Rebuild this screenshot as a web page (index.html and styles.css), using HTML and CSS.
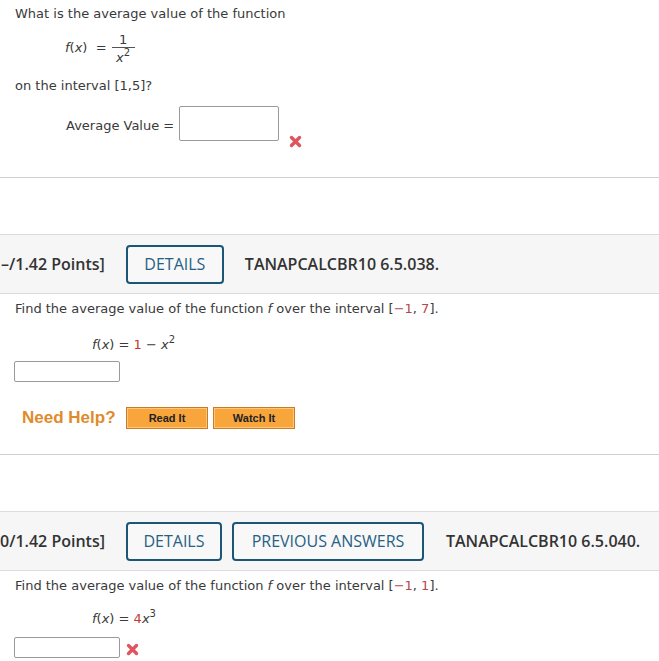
FILE: index.html
```html
<!DOCTYPE html>
<html lang="en">
<head>
<meta charset="utf-8">
<title>Average value</title>
<link rel="stylesheet" href="styles.css">
</head>
<body>
<div class="q q1">
  <p class="txt first">What is the average value of the function</p>
  <div class="formula">
    <span class="fx"><i>f</i>(<i>x</i>) &nbsp;=</span>
    <span class="frac"><span class="num">1</span><span class="bar"></span><span class="den"><i>x</i><sup>2</sup></span></span>
  </div>
  <p class="txt interval">on the interval [1,5]?</p>
  <div class="answer">
    <span class="label">Average Value =</span>
    <span class="box big"></span>
    <svg class="wrong w1" width="13" height="13" viewBox="0 0 13 13"><path d="M2.5 2.5 L10.5 10.5 M10.5 2.5 L2.5 10.5" stroke="#e0545d" stroke-width="3.4" stroke-linecap="round"/></svg>
  </div>
</div>

<div class="head h1">
  <span class="pts">&ndash;/1.42 Points]</span>
  <span class="btn d1">DETAILS</span>
  <span class="code">TANAPCALCBR10 6.5.038.</span>
</div>

<div class="q q2">
  <p class="txt first">Find the average value of the function <i>f</i> over the interval [<span class="red">&minus;1</span>, <span class="red">7</span>].</p>
  <p class="txt eq"><i>f</i>(<i>x</i>) = <span class="red2">1</span> &minus; <i>x</i><sup>2</sup></p>
  <div class="box small"></div>
  <div class="help">
    <span class="need">Need Help?</span>
    <span class="obtn">Read It</span>
    <span class="obtn">Watch It</span>
  </div>
</div>

<div class="head h2">
  <span class="pts">0/1.42 Points]</span>
  <span class="btn d2">DETAILS</span>
  <span class="btn prev">PREVIOUS ANSWERS</span>
  <span class="code">TANAPCALCBR10 6.5.040.</span>
</div>

<div class="q q3">
  <p class="txt first">Find the average value of the function <i>f</i> over the interval [<span class="red">&minus;1</span>, <span class="red">1</span>].</p>
  <p class="txt eq eq3"><i>f</i>(<i>x</i>) = <span class="red2">4</span><i>x</i><sup>3</sup></p>
  <div class="answer3">
    <div class="box small"></div>
    <svg class="wrong w3" width="13" height="13" viewBox="0 0 13 13"><path d="M2.5 2.5 L10.5 10.5 M10.5 2.5 L2.5 10.5" stroke="#e0545d" stroke-width="3.4" stroke-linecap="round"/></svg>
  </div>
</div>
</body>
</html>
```

FILE: styles.css
```css
html, body {
  margin: 0;
  padding: 0;
  background: #ffffff;
}
body {
  font-family: "DejaVu Sans", Verdana, sans-serif;
  font-size: 13px;
  color: #3a3a3a;
  width: 659px;
  overflow: hidden;
}
.q {
  padding-left: 14px;
  box-sizing: border-box;
}
.txt {
  margin: 0 0 0 1px;
  line-height: 16px;
  white-space: nowrap;
}
sup {
  font-size: 10px;
  line-height: 0;
  vertical-align: 6px;
}
.red { color: #b4474c; }
.red2 { color: #c03a32; }

/* question 1 */
.q1 {
  height: 178px;
  border-bottom: 1px solid #cfcfcf;
  padding-top: 6px;
}
.formula {
  display: flex;
  align-items: flex-start;
  margin: 11px 0 0 51px;
}
.fx { line-height: 16px; padding-top: 7px; }
.frac {
  display: flex;
  flex-direction: column;
  align-items: center;
  margin-left: 5px;
  width: 23px;
}
.num { line-height: 14px; }
.bar { width: 23px; height: 1px; background: #555; }
.den { line-height: 16px; padding-top: 2px; }
.interval { margin-top: 12px; }
.answer {
  display: flex;
  align-items: center;
  margin: 12px 0 0 52px;
}
.label { width: 113px; padding-top: 3px; }
.box {
  display: block;
  box-sizing: border-box;
  border: 1px solid #9a9a9a;
  border-radius: 2px;
  background: #fff;
}
.big { width: 100px; height: 35px; }
.wrong { display: block; }
.w1 { align-self: flex-end; margin: 0 0 -7px 10px; }

/* headers */
.head {
  display: flex;
  align-items: center;
  box-sizing: border-box;
  border-top: 1px solid #dcdcdc;
  border-bottom: 1px solid #dcdcdc;
  background: #f6f6f6;
  font-family: "Open Sans", sans-serif;
  font-size: 16px;
  white-space: nowrap;
}
.h1 { margin-top: 56px; height: 60px; }
.h2 { margin-top: 56px; height: 60px; }
.pts { font-weight: 600; color: #333; }
.h1 .pts { margin-left: 1px; }
.btn {
  box-sizing: border-box;
  height: 39px;
  display: inline-flex;
  align-items: center;
  justify-content: center;
  border: 2px solid #1c5677;
  border-radius: 4px;
  color: #265f84;
  background: #f8f8f8;
}
.d1 { width: 98px; margin-left: 21px; }
.d2 { width: 96px; margin-left: 21px; }
.prev { width: 192px; margin-left: 10px; }
.code { font-weight: 600; color: #333; }
.h1 .code { margin-left: 21px; }
.h2 .code { margin-left: 22px; }

/* question 2 */
.q2 {
  padding-top: 7px;
  height: 161px;
  border-bottom: 1px solid #cfcfcf;
}
.eq { margin: 20px 0 0 78px; }
.small { width: 106px; height: 21px; }
.q2 .small { margin-top: 8px; }
.help {
  display: flex;
  align-items: center;
  margin: 25px 0 0 8px;
}
.need {
  font-family: "Liberation Sans", Arial, sans-serif;
  font-weight: bold;
  font-size: 17px;
  color: #e08b2b;
  width: 104px;
}
.obtn {
  box-sizing: border-box;
  width: 82px;
  height: 22px;
  display: inline-flex;
  align-items: center;
  justify-content: center;
  font-family: "Liberation Sans", Arial, sans-serif;
  font-weight: bold;
  font-size: 11px;
  color: #222;
  background: #f8a53c;
  border: 1px solid #cc7a24;
  box-shadow: inset 0 0 0 1px #fbc778;
  margin-right: 5px;
}

/* question 3 */
.q3 { padding-top: 7px; }
.eq3 { margin-top: 17px; }
.answer3 {
  display: flex;
  align-items: flex-end;
  margin-top: 10px;
}
.w3 { margin: 0 0 2px 6px; }
```
